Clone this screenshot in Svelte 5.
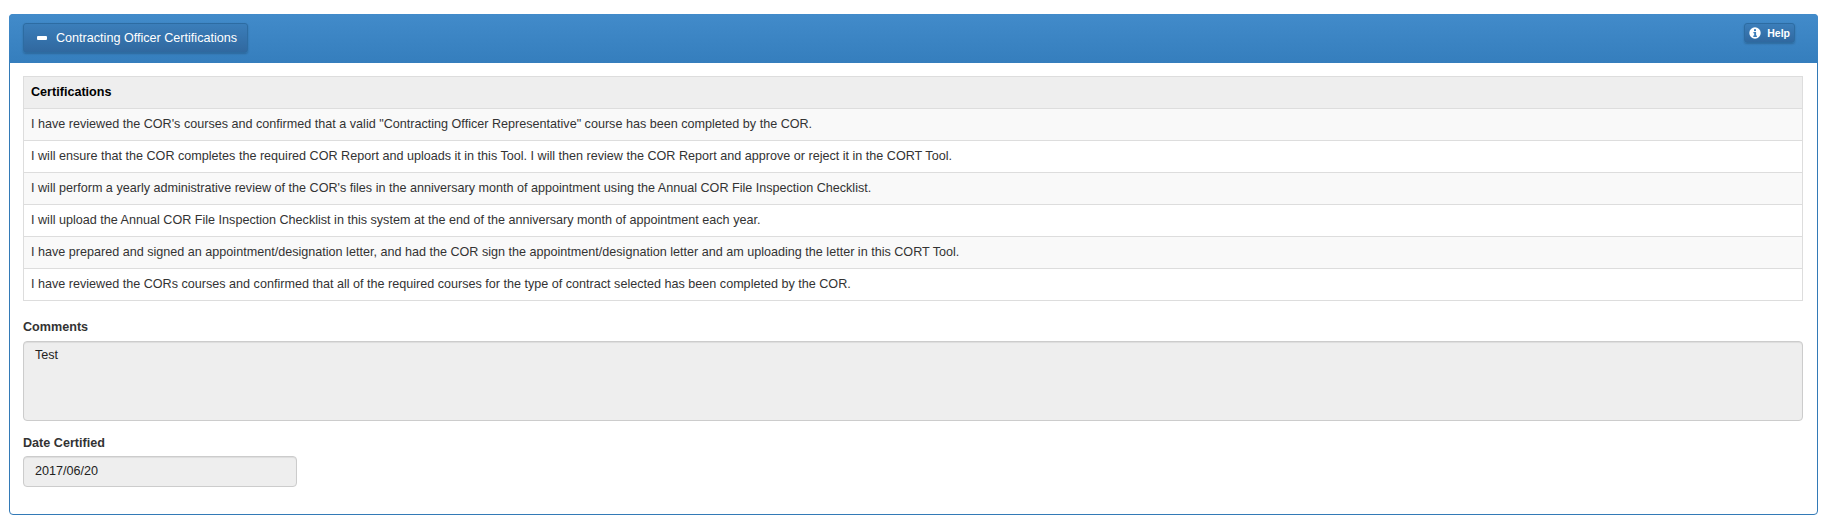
<script>
  // Read-only certification panel
  const certifications = [
    `I have reviewed the COR's courses and confirmed that a valid "Contracting Officer Representative" course has been completed by the COR.`,
    "I will ensure that the COR completes the required COR Report and uploads it in this Tool. I will then review the COR Report and approve or reject it in the CORT Tool.",
    "I will perform a yearly administrative review of the COR's files in the anniversary month of appointment using the Annual COR File Inspection Checklist.",
    "I will upload the Annual COR File Inspection Checklist in this system at the end of the anniversary month of appointment each year.",
    "I have prepared and signed an appointment/designation letter, and had the COR sign the appointment/designation letter and am uploading the letter in this CORT Tool.",
    "I have reviewed the CORs courses and confirmed that all of the required courses for the type of contract selected has been completed by the COR."
  ];
</script>

<div class="page">
  <section class="panel">
    <header class="panel-head">
      <button class="btn toggle" type="button"><span class="minus"></span>Contracting Officer Certifications</button>
      <button class="btn help" type="button">
        <svg viewBox="0 0 12 12" width="12" height="12" aria-hidden="true">
          <circle cx="6" cy="6" r="5.7" fill="#fff" />
          <rect x="5" y="2.2" width="2" height="1.9" fill="#3a7cb8" />
          <path d="M4.4 5h2.7v3.6h.8V10H4.3V8.6h.9V6.3h-.8z" fill="#3a7cb8" />
        </svg>
        Help
      </button>
    </header>
    <div class="panel-body">
      <table>
        <thead>
          <tr><th>Certifications</th></tr>
        </thead>
        <tbody>
          {#each certifications as text}
            <tr><td>{text}</td></tr>
          {/each}
        </tbody>
      </table>

      <label for="comments">Comments</label>
      <textarea id="comments" disabled>Test</textarea>

      <label class="date-label" for="certified">Date Certified</label>
      <input id="certified" type="text" value="2017/06/20" disabled />
    </div>
  </section>
</div>

<style>
  :global(body) { margin: 0; background: #fff; }
  .page { padding: 14px 7px 0 9px; font-family: "Liberation Sans", Arial, sans-serif; font-size: 12.6px; color: #333; }
  .panel { border: 1px solid #337ab7; border-radius: 4px; background: #fff; height: 501px; box-sizing: border-box; }
  .panel-head {
    display: flex; justify-content: space-between; align-items: flex-start;
    height: 49px; box-sizing: border-box; margin: -1px -1px 0; padding: 9px 23px 0 14px;
    background: linear-gradient(to bottom, #428bca, #357ebd); border-radius: 4px 4px 0 0;
  }
  .btn {
    display: flex; align-items: center; color: #fff; border: 1px solid #2d6ca2; border-radius: 3px;
    background: linear-gradient(to bottom, #3b7eba, #30689f); box-shadow: 0 1px 2px rgba(0,0,0,.2);
    font-family: inherit; padding: 0;
  }
  .toggle { height: 30px; padding: 0 10px 0 13px; font-size: 12.6px; }
  .minus { width: 10px; height: 4px; border-radius: 1px; background: #fff; margin-right: 9px; }
  .help { height: 20px; padding: 0 4px; font-size: 10.5px; font-weight: 700; gap: 6px; }
  .panel-body { padding: 13px 14px 0 13px; }
  table { width: 100%; border-collapse: collapse; }
  th, td { border: 1px solid #ddd; height: 32px; box-sizing: border-box; padding: 0 7px 2px; text-align: left; font-size: 12.6px; }
  th { background: #eee; color: #000; font-weight: 700; }
  tbody tr:nth-child(odd) td { background: #f9f9f9; }
  label { display: block; font-weight: 700; font-size: 12.6px; line-height: 17px; margin: 18px 0 5px; color: #333; }
  .date-label { margin-top: 14px; margin-bottom: 4px; }
  textarea, input {
    display: block; box-sizing: border-box; background: #eee; border: 1px solid #ccc; border-radius: 4px;
    font-family: inherit; font-size: 12.6px; color: #000; padding: 6px 11px 5px; margin: 0;
    box-shadow: inset 0 1px 1px rgba(0,0,0,.075); opacity: 1; -webkit-text-fill-color: #222;
  }
  textarea { width: 100%; height: 80px; resize: none; }
  input { width: 274px; height: 31px; padding: 4px 11px 6px; }
</style>
